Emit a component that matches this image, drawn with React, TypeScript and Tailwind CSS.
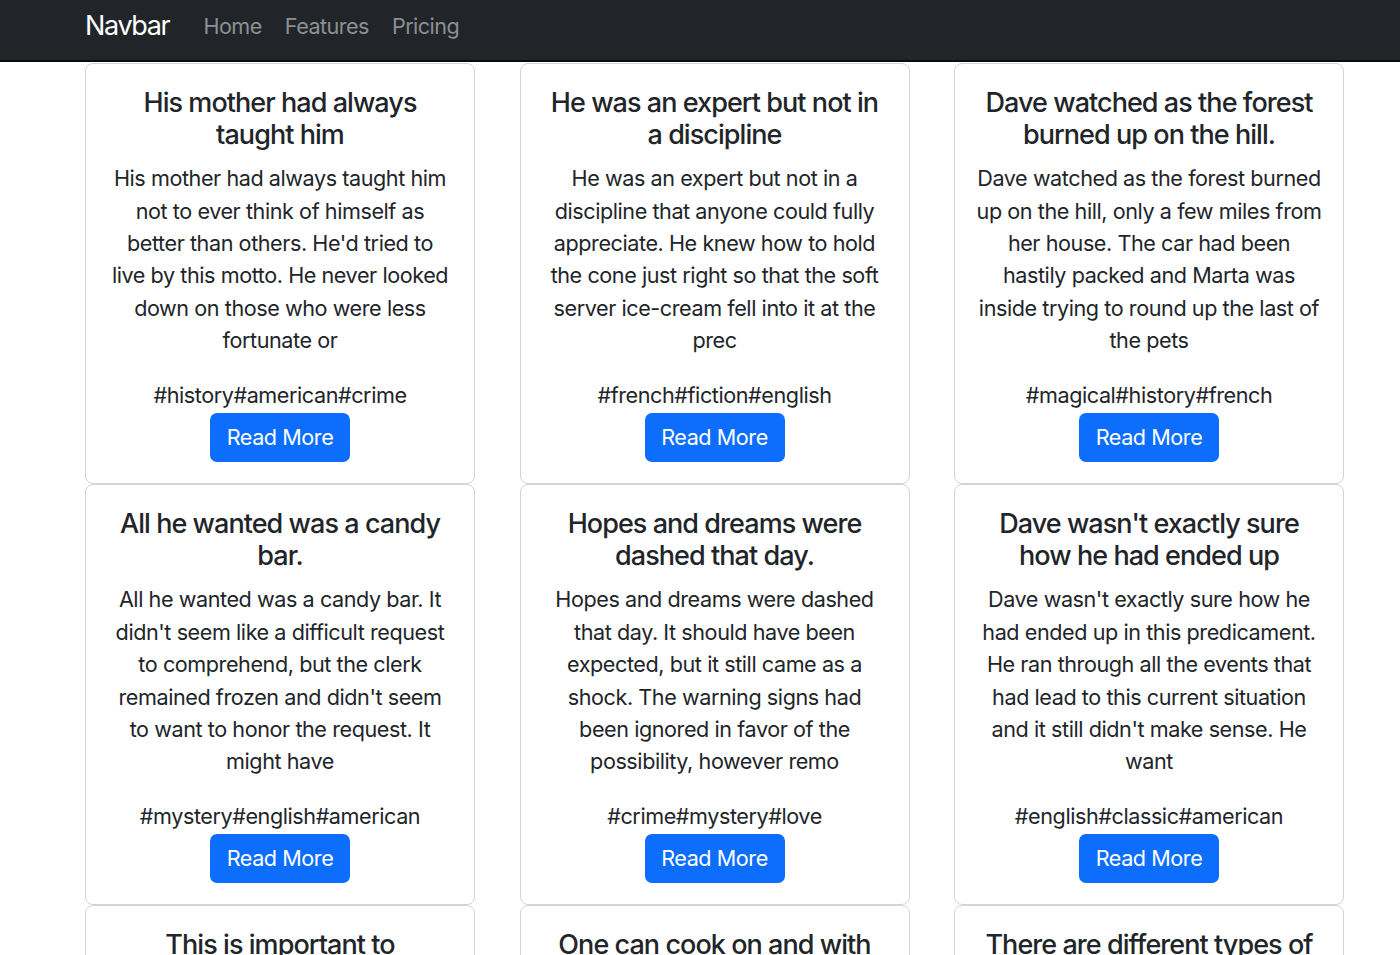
import { FC, Fragment } from 'react';

// body text kept as the lines shown in the design so wrapping stays the same
const posts = [
  {
    title: 'His mother had always taught him',
    body: [
      'His mother had always taught him',
      'not to ever think of himself as',
      "better than others. He'd tried to",
      'live by this motto. He never looked',
      'down on those who were less',
      'fortunate or',
    ],
    tags: ['history', 'american', 'crime'],
  },
  {
    title: 'He was an expert but not in a discipline',
    body: [
      'He was an expert but not in a',
      'discipline that anyone could fully',
      'appreciate. He knew how to hold',
      'the cone just right so that the soft',
      'server ice-cream fell into it at the',
      'prec',
    ],
    tags: ['french', 'fiction', 'english'],
  },
  {
    title: 'Dave watched as the forest burned up on the hill.',
    body: [
      'Dave watched as the forest burned',
      'up on the hill, only a few miles from',
      'her house. The car had been',
      'hastily packed and Marta was',
      'inside trying to round up the last of',
      'the pets',
    ],
    tags: ['magical', 'history', 'french'],
  },
  {
    title: 'All he wanted was a candy bar.',
    body: [
      'All he wanted was a candy bar. It',
      "didn't seem like a difficult request",
      'to comprehend, but the clerk',
      "remained frozen and didn't seem",
      'to want to honor the request. It',
      'might have',
    ],
    tags: ['mystery', 'english', 'american'],
  },
  {
    title: 'Hopes and dreams were dashed that day.',
    body: [
      'Hopes and dreams were dashed',
      'that day. It should have been',
      'expected, but it still came as a',
      'shock. The warning signs had',
      'been ignored in favor of the',
      'possibility, however remo',
    ],
    tags: ['crime', 'mystery', 'love'],
  },
  {
    title: "Dave wasn't exactly sure how he had ended up",
    body: [
      "Dave wasn't exactly sure how he",
      'had ended up in this predicament.',
      'He ran through all the events that',
      'had lead to this current situation',
      "and it still didn't make sense. He",
      'want',
    ],
    tags: ['english', 'classic', 'american'],
  },
  {
    title: 'This is important to remember.',
    body: [
      'This is important to remember.',
      "Love isn't like pie. You don't need",
      'to divide it among all your friends',
      'and loved ones. No matter how',
      'much love you give, you can',
      'always give more.',
    ],
    tags: ['magical', 'crime', 'love'],
  },
  {
    title: 'One can cook on and with an open fire.',
    body: [
      'One can cook on and with an open',
      'fire. These are some of the ways to',
      'cook with fire outside. Cooking',
      'meat using a spit is a great way to',
      'evenly cook meat. In order to keep',
      'meat',
    ],
    tags: ['american', 'fiction', 'mystery'],
  },
  {
    title: 'There are different types of secrets.',
    body: [
      'There are different types of',
      'secrets. She had held onto plenty',
      'of them during her life, but this',
      'one was different. She found',
      'herself holding onto the worst',
      'type. It was the type',
    ],
    tags: ['classic', 'french', 'history'],
  },
];

const navLinks = ['Home', 'Features', 'Pricing'];

const PostCard: FC<{ title: string; body: string[]; tags: string[] }> = ({ title, body, tags }) => (
  <div className="flex flex-col rounded-[8px] border border-[#d3d4d5] bg-white">
    <div className="flex flex-col items-center px-[21.6px] pt-[22.6px] pb-[21.6px] text-center">
      <h5 className="mb-[10.8px] text-[27px] leading-[32.4px] font-medium tracking-[-0.035em] text-[#212529]">
        {title}
      </h5>
      <p className="mb-[21.6px] text-[21.6px] leading-[32.4px] tracking-[-0.02em] whitespace-nowrap text-[#212529]">
        {body.map((line, i) => (
          <Fragment key={i}>
            {i > 0 && <br />}
            {line}
          </Fragment>
        ))}
      </p>
      <div className="mt-px text-[21.6px] leading-[32.4px] tracking-[-0.02em] text-[#212529]">
        {tags.map((t) => `#${t}`).join('')}
      </div>
      <button className="mt-[1px] h-[49px] w-[140px] rounded-[7px] bg-[#0d6efd] text-[21.6px] tracking-[-0.02em] text-white">
        Read More
      </button>
    </div>
  </div>
);

export default function App() {
  return (
    <div className="min-h-screen bg-white font-['Inter',sans-serif]">
      <nav className="h-[62px] border-b-2 border-[#0a0b0c] bg-[#212529]">
        <div className="flex h-[52px] items-center pl-[85px]">
          <a className="mr-[34px] text-[27px] tracking-[-0.05em] text-white">Navbar</a>
          <ul className="flex gap-[23px]">
            {navLinks.map((l) => (
              <li key={l} className="text-[21.6px] tracking-[-0.025em] text-[#8d8f92]">
                {l}
              </li>
            ))}
          </ul>
        </div>
      </nav>
      <main className="grid grid-cols-[390px_390px_390px] gap-x-[44.5px] pt-px pl-[85px]">
        {posts.map((p) => (
          <PostCard key={p.title} {...p} />
        ))}
      </main>
    </div>
  );
}
